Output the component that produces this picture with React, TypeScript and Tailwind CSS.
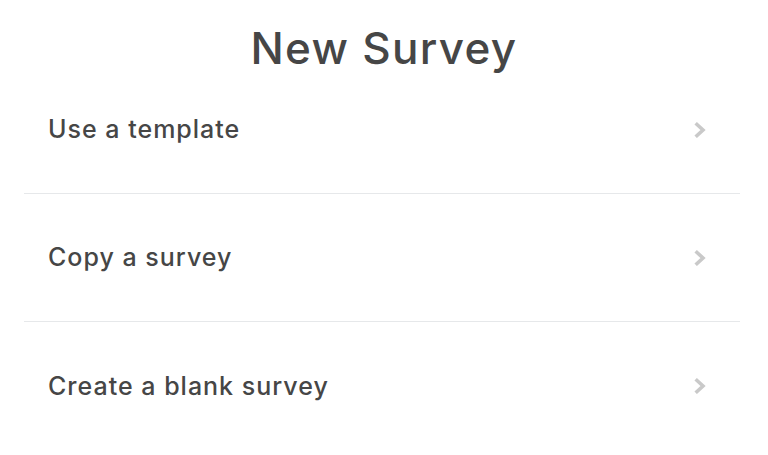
const OPTIONS = ["Use a template", "Copy a survey", "Create a blank survey"]

function Chevron() {
  return (
    <svg width="14" height="16" viewBox="0 0 14 16" className="shrink-0">
      <polyline points="4,2.5 10,8 4,13.5" fill="none" stroke="#c9c9c9" strokeWidth="3.6" strokeLinecap="square" />
    </svg>
  )
}

export default function App() {
  return (
    <div className="min-h-screen bg-white font-['Inter','Liberation_Sans',sans-serif] text-[#464646]">
      <div className="h-[66px] pt-[26px] text-center">
        <h1 className="text-[44px] leading-none font-medium tracking-[1.3px]">New Survey</h1>
      </div>
      <div className="pl-6 pr-7">
        {OPTIONS.map((label, i) => (
          <div
            key={label}
            className={`flex h-[128px] items-center justify-between pl-6 pr-[33px] ${
              i < OPTIONS.length - 1 ? "border-b-[1.5px] border-[#e6e8ea]" : ""
            }`}
          >
            <span className="pt-[1px] text-[25px] font-medium tracking-[1px]">{label}</span>
            <Chevron />
          </div>
        ))}
      </div>
    </div>
  )
}
